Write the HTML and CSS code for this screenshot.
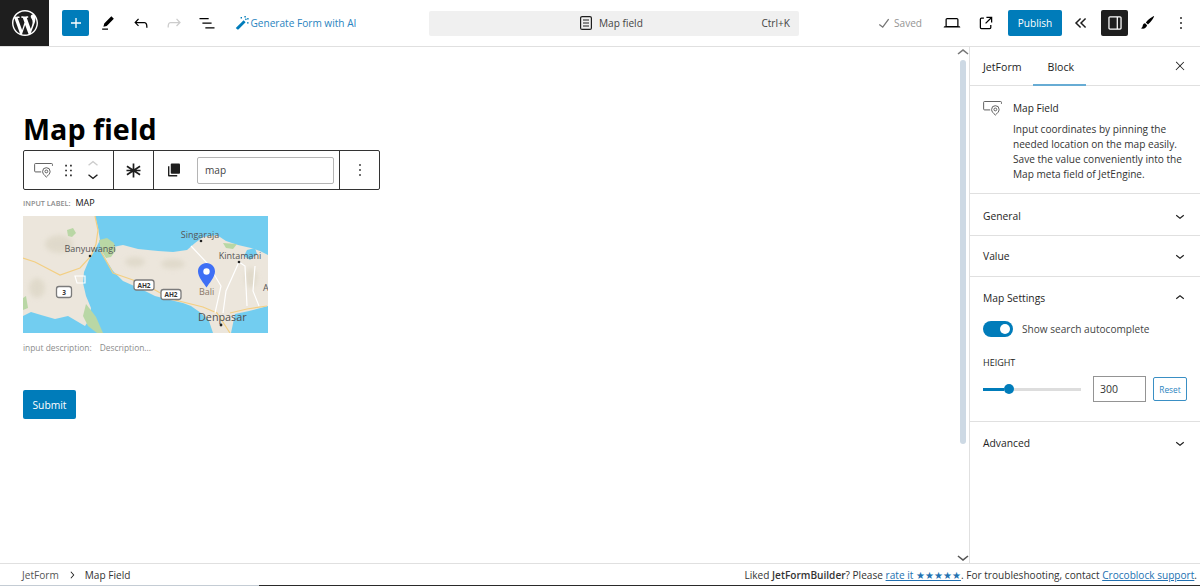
FILE: index.html
```html
<!DOCTYPE html>
<html lang="en">
<head>
    <meta charset="UTF-8">
    <meta name="viewport" content="width=device-width, initial-scale=1.0">
    <title>Map field</title>
    <link rel="stylesheet" href="styles.css">
</head>
<body>
    <header class="topbar">
        <div class="topbar-left">
            <a class="wp-logo">
                <svg width="26" height="26" viewBox="0 0 20 20"><path fill="#fff" d="M20 10c0-5.51-4.49-10-10-10C4.48 0 0 4.49 0 10c0 5.52 4.48 10 10 10 5.51 0 10-4.48 10-10zM7.78 15.37L4.37 6.22c.55-.02 1.17-.08 1.17-.08.5-.06.44-1.13-.06-1.11 0 0-1.45.11-2.37.11-.18 0-.37 0-.58-.01C4.12 2.69 6.87 1.11 10 1.11c2.33 0 4.45.87 6.05 2.34-.68-.11-1.65.39-1.65 1.58 0 .74.45 1.36.9 2.1.35.61.55 1.36.55 2.46 0 1.49-1.4 5-1.4 5l-3.03-8.37c.54-.02.82-.17.82-.17.5-.05.44-1.25-.06-1.22 0 0-1.44.12-2.38.12-.87 0-2.33-.12-2.33-.12-.5-.03-.56 1.2-.06 1.22l.92.08 1.26 3.41zM17.41 10c.24-.64.74-1.87.43-4.25.7 1.29 1.05 2.71 1.05 4.25 0 3.29-1.73 6.24-4.4 7.78.97-2.59 1.94-5.2 2.92-7.78zM6.1 18.09C3.12 16.65 1.11 13.53 1.11 10c0-1.3.23-2.48.72-3.59C3.25 10.3 4.67 14.2 6.1 18.09zm4.03-6.63l2.58 6.98c-.86.29-1.76.45-2.71.45-.79 0-1.57-.11-2.29-.33.81-2.38 1.62-4.74 2.42-7.1z"/></svg>
            </a>
            <button class="add-btn">
                <svg width="20" height="20" viewBox="0 0 24 24"><path fill="#fff" d="M18 11.2h-5.2V6h-1.6v5.2H6v1.6h5.2V18h1.6v-5.2H18z"/></svg>
            </button>
            <button class="icon-btn"><svg width="20" height="20" viewBox="0 0 24 24"><path d="m19 7-3-3-8.5 8.5-1 4 4-1L19 7Zm-7 11.5H5V20h7v-1.5Z"/></svg></button>
            <button class="icon-btn"><svg width="20" height="20" viewBox="0 0 24 24"><path d="M18.3 11.7c-.6-.6-1.4-.9-2.3-.9H6.7l2.9-3.3-1.1-1-4.5 5L8.5 16l1-1-2.7-2.7H16c.5 0 .9.2 1.3.5 1 1 1 3.4 1 4.5v.3h1.5v-.2c0-1.5 0-4.3-1.5-5.7z"/></svg></button>
            <button class="icon-btn is-disabled"><svg width="20" height="20" viewBox="0 0 24 24"><path d="M15.6 6.5l-1.1 1 2.9 3.3H8c-.9 0-1.7.3-2.3.9-1.4 1.5-1.4 4.2-1.4 5.6v.2h1.5v-.3c0-1.1 0-3.5 1-4.5.3-.3.7-.5 1.3-.5h9.2L14.5 15l1.1 1.1 4.6-4.6-4.6-5z"/></svg></button>
            <button class="icon-btn"><svg width="20" height="20" viewBox="0 0 24 24"><path d="M3 6h11v1.5H3V6Zm3.5 5.5h11V13h-11v-1.5ZM21 17H10v1.5h11V17Z"/></svg></button>
            <a class="ai-link">
                <svg width="14" height="14" viewBox="0 0 14 14"><path fill="#007cba" d="M8.6 4.2l2 2L3.4 13.6 2.4 13.6.8 12zM5.6 1h1.4v1.4H5.6zM9.4 0h1.4v1.6H9.4zM12.2 2h1.4v1.4h-1.4zM12 6.2h1.6v1.4H12zM10.9 2.2l1 1-1 1-1-1z"/></svg>
                <span>Generate Form with AI</span>
            </a>
        </div>
        <div class="command-pill">
            <span class="pill-title">
                <svg width="16" height="16" viewBox="0 0 16 16" fill="none" stroke="#1e1e1e" stroke-width="1.2"><rect x="2.6" y="1.6" width="10.8" height="12.8" rx="1.5"/><path d="M5 5h6M5 8h6M5 11h6"/></svg>
                Map field
            </span>
            <span class="pill-key">Ctrl+K</span>
        </div>
        <div class="topbar-right">
            <span class="saved">
                <svg width="14" height="14" viewBox="4 4 16 16"><path fill="#757575" d="M16.7 7.1l-6.3 8.5-3.3-2.5-.9 1.2 4.5 3.4L17.9 8z"/></svg>
                Saved
            </span>
            <button class="icon-btn"><svg width="20" height="20" viewBox="0 0 24 24"><path d="M20.5 16h-.7V8c0-1.1-.9-2-2-2H6.2c-1.1 0-2 .9-2 2v8h-.7c-.8 0-1.5.7-1.5 1.5h20c0-.8-.7-1.5-1.5-1.5zM5.700 8c0-.3.2-.5.5-.5h11.600c.3 0 .5.2.5.5v7.600H5.700V8z"/></svg></button>
            <button class="icon-btn external-btn"><svg width="20" height="20" viewBox="0 0 24 24"><path d="M19.5 4.5h-7V6h4.44l-5.97 5.97 1.06 1.06L18 7.06v4.44h1.5v-7Zm-13 1a2 2 0 0 0-2 2v10a2 2 0 0 0 2 2h10a2 2 0 0 0 2-2v-3H17v3a.5.5 0 0 1-.5.5h-10a.5.5 0 0 1-.5-.5v-10a.5.5 0 0 1 .5-.5h3V5.500h-3Z"/></svg></button>
            <button class="publish-btn">Publish</button>
            <button class="icon-btn">
                <svg width="20" height="20" viewBox="0 0 24 24" fill="none" stroke="#1e1e1e" stroke-width="1.8"><path d="M11.5 6.5 6 12l5.500 5.500M17.500 6.500 12 12l5.500 5.500"/></svg>
            </button>
            <button class="panel-btn">
                <svg width="20" height="20" viewBox="0 0 24 24"><path fill="#fff" d="M18 4H6c-1.1 0-2 .9-2 2v12c0 1.1.9 2 2 2h12c1.1 0 2-.9 2-2V6c0-1.1-.9-2-2-2zm-4 14.5H6c-.3 0-.5-.2-.5-.5V6c0-.3.2-.5.5-.5h8v13zm4.500-.5c0 .3-.2.5-.5.5h-2.500v-13H18c.3 0 .5.2.5.5v12z"/></svg>
            </button>
            <button class="icon-btn brush-btn"><svg width="20" height="20" viewBox="0 0 24 24"><path d="M20.5 3.5c-1.6.2-7.5 4.4-9.9 7.900l2.600 2.300c3-2.600 7.600-8.500 7.300-10.200zM9.700 12.400c-2 .3-2.600 1.800-3 3.400-.3 1.200-1 1.900-2.200 2.400 2.700 1.300 6.600.6 7.600-3.400z"/></svg></button>
            <button class="icon-btn"><svg width="20" height="20" viewBox="0 0 24 24"><path d="M13 19h-2v-2h2v2zm0-6h-2v-2h2v2zm0-6h-2V5h2v2z"/></svg></button>
        </div>
    </header>

    <div class="workspace">
        <main class="canvas">
            <h1 class="form-title">Map field</h1>

            <div class="block-toolbar">
                <div class="toolbar-group group-block">
                    <svg width="20" height="15" viewBox="0 0 21 16" fill="none" stroke="#555"><path d="M7.5 9.5H1.5a1 1 0 0 1-1-1V1.500a1 1 0 0 1 1-1h17a1 1 0 0 1 1 1V3"/><path d="M13 15c-2-2-4-3.500-4-6a4 4 0 0 1 8 0c0 2.500-2 4-4 6z"/><circle cx="13" cy="9" r="1.5"/></svg>
                    <svg class="drag-handle" width="13" height="15" viewBox="4 3 16 18"><path fill="#1e1e1e" d="M8 7h2V5H8v2zm0 6h2v-2H8v2zm0 6h2v-2H8v2zm6-14v2h2V5h-2zm0 8h2v-2h-2v2zm0 6h2v-2h-2v2z"/></svg>
                    <div class="mover">
                        <svg width="16" height="13" viewBox="3 6 18 10"><path fill="#ccc" d="M6.5 12.4L12 8l5.500 4.400-.9 1.200L12 10l-4.500 3.600-1-1.200z"/></svg>
                        <svg width="16" height="13" viewBox="3 8 18 10"><path fill="#1e1e1e" d="M17.5 11.600L12 16l-5.500-4.400.9-1.200L12 14l4.500-3.600 1 1.200z"/></svg>
                    </div>
                </div>
                <div class="toolbar-group group-star">
                    <svg width="15" height="15" viewBox="0 0 16 16" stroke="#1e1e1e" stroke-width="1.8"><path d="M8 .5v15M1 3.500l14 9M15 3.500l-14 9M.5 8h15"/></svg>
                </div>
                <div class="toolbar-group group-name">
                    <svg width="12" height="14" viewBox="0 0 13 14"><path fill="#1e1e1e" d="M4 0h8a1 1 0 0 1 1 1v9a1 1 0 0 1-1 1H4a1 1 0 0 1-1-1V1a1 1 0 0 1 1-1z"/><path fill="#1e1e1e" d="M1.500 3v9.500H10V14H1a1 1 0 0 1-1-1V3z"/></svg>
                    <div class="name-input">map</div>
                </div>
                <div class="toolbar-group group-more">
                    <svg width="20" height="20" viewBox="0 0 24 24"><path fill="#1e1e1e" d="M13 19h-2v-2h2v2zm0-6h-2v-2h2v2zm0-6h-2V5h2v2z"/></svg>
                </div>
            </div>

            <div class="field-label"><span class="hint-caps">INPUT LABEL:</span><span class="label-value">MAP</span></div>

            <svg class="map" width="245" height="117" viewBox="0 0 245 117">
                <defs>
                    <filter id="soft" x="-20%" y="-20%" width="140%" height="140%"><feGaussianBlur stdDeviation="2.5"/></filter>
                    <filter id="edge"><feGaussianBlur stdDeviation=".35"/></filter>
                </defs>
                <rect width="245" height="117" fill="#72cdf0"/>
                <g filter="url(#edge)">
                    <path fill="#ece6dc" d="M0 0H72L75 12 77 24 72 34 66 44 61 56 60 67 63 80 68 92 66 104 62 110 45 100 32 103 18 99 8 96 0 100Z"/>
                    <path fill="#ece6dc" d="M77 24 90 31 100 29 115 33 135 35 150 36 164 34 172 27 180 21 194 19 203 25 215 29 228 32 237 35 245 39V90L226 95 212 98 208 117H190L186 105 178 97 168 90 160 87 147 84 132 80 118 73 100 65 90 55 83 44 78 34Z"/>
                    <path fill="#b9d7a5" d="M60 100 63 88 67 93 73 101 80 117H74L65 110Z"/>
                    <path fill="#b9d7a5" d="M76 24 84 22 91 27 93 34 88 41 83 42 78 34Z"/>
                    <path fill="#b9d7a5" d="M44 14 50 12 53 17 49 21 45 20ZM200 27 214 28 210 33 203 32ZM0 82 3 80 5 92 0 94Z"/>
                </g>
                <g filter="url(#soft)" fill="#d8d2c0" opacity=".6">
                    <ellipse cx="36" cy="28" rx="14" ry="9"/>
                    <ellipse cx="14" cy="72" rx="8" ry="10"/>
                    <ellipse cx="112" cy="46" rx="10" ry="5"/>
                    <ellipse cx="150" cy="48" rx="12" ry="5"/>
                    <ellipse cx="228" cy="62" rx="6" ry="10"/>
                </g>
                <path fill="#72cdf0" d="M224 34 232 32 234 38 227 44 221 40Z"/>
                <path fill="none" stroke="#f3cf83" stroke-width="1.2" d="M72 0 75 14 73 28 68 40 57 52 37 59 12 46 0 42M77 34 90 57 110 64 132 74 148 83 164 87 180 91 194 97 207 117M207 97 224 93 244 90"/>
                <path fill="none" stroke="#fff" stroke-width="1.2" d="M168 30 185 48 198 70 192 97M200 97 203 75 216 46 222 50 224 90M232 50 230 75 236 90M52 60H62V67H54Z"/>
                <g class="map-shield">
                    <rect x="33.5" y="70.5" width="15" height="11" rx="2.5"/><text x="41" y="78.500">3</text>
                    <rect x="111" y="64" width="20" height="10" rx="2.5"/><text x="121" y="71.500">AH2</text>
                    <rect x="138" y="73.5" width="20" height="10" rx="2.5"/><text x="148" y="81">AH2</text>
                </g>
                <g class="map-text">
                    <text x="67" y="36">Banyuwangi</text>
                    <text x="177" y="22">Singaraja</text>
                    <text x="217" y="43">Kintamani</text>
                    <text x="240" y="75">A</text>
                    <text class="map-bali" x="176" y="79">Bali</text>
                    <text class="map-big" x="175" y="105">Denpasar</text>
                </g>
                <circle cx="67" cy="40" r="1.3" fill="#222"/>
                <circle cx="178" cy="25" r="1.3" fill="#222"/>
                <circle cx="216" cy="46" r="1.3" fill="#222"/>
                <circle cx="198" cy="109" r="1.4" fill="#222"/>
                <path fill="#3e6ff5" d="M183.500 47c-4.800 0-8.500 3.600-8.500 8.500 0 5.500 6 12 8.500 16 2.500-4 8.500-10.500 8.500-16 0-4.900-3.700-8.500-8.500-8.500z"/>
                <circle cx="183.5" cy="55.5" r="3.2" fill="#fff"/>
            </svg>

            <div class="field-desc"><span>input description:</span><span>Description...</span></div>

            <button class="submit-btn">Submit</button>
        </main>

        <div class="scrollbar">
            <svg width="12" height="12" viewBox="6 6 12 12"><path fill="#777" d="M6.5 12.400L12 8l5.500 4.400-.9 1.200L12 10l-4.500 3.600-1-1.200z"/></svg>
            <div class="scroll-thumb"></div>
            <svg class="scroll-down" width="12" height="12" viewBox="6 6 12 12"><path fill="#555" d="M17.5 11.600L12 16l-5.500-4.400.9-1.200L12 14l4.500-3.600 1 1.200z"/></svg>
        </div>

        <aside class="sidebar">
            <div class="tabs">
                <span class="tab">JetForm</span>
                <span class="tab is-active">Block</span>
                <svg class="tabs-close" width="14" height="14" viewBox="0 0 24 24"><path fill="#1e1e1e" d="M13 11.800l6.100-6.300-1-1-6.100 6.200-6.100-6.300-1 1 6.100 6.300-6.500 6.700 1 1 6.500-6.600 6.500 6.600 1-1z"/></svg>
            </div>

            <section class="block-card">
                <svg class="block-card-icon" width="20" height="15" viewBox="0 0 21 16" fill="none" stroke="#555"><path d="M7.5 9.5H1.500a1 1 0 0 1-1-1V1.500a1 1 0 0 1 1-1h17a1 1 0 0 1 1 1V3"/><path d="M13 15c-2-2-4-3.500-4-6a4 4 0 0 1 8 0c0 2.500-2 4-4 6z"/><circle cx="13" cy="9" r="1.5"/></svg>
                <div>
                    <h2 class="block-card-title">Map Field</h2>
                    <p class="block-card-text">Input coordinates by pinning the needed location on the map easily. Save the value conveniently into the Map meta field of JetEngine.</p>
                </div>
            </section>

            <section class="panel panel-general">
                <span>General</span>
                <svg width="18" height="18" viewBox="0 0 24 24"><path fill="#1e1e1e" d="M17.5 11.600L12 16l-5.500-4.400.9-1.200L12 14l4.500-3.600 1 1.200z"/></svg>
            </section>
            <section class="panel panel-value">
                <span>Value</span>
                <svg width="18" height="18" viewBox="0 0 24 24"><path fill="#1e1e1e" d="M17.5 11.600L12 16l-5.500-4.400.9-1.200L12 14l4.500-3.600 1 1.200z"/></svg>
            </section>

            <section class="map-settings">
                <div class="panel-head">
                    <span>Map Settings</span>
                    <svg width="18" height="18" viewBox="0 0 24 24"><path fill="#1e1e1e" d="M6.5 12.400L12 8l5.500 4.400-.9 1.200L12 10l-4.500 3.600-1-1.200z"/></svg>
                </div>
                <div class="toggle-row">
                    <span class="toggle"><span class="toggle-knob"></span></span>
                    <span>Show search autocomplete</span>
                </div>
                <div class="caps-label">HEIGHT</div>
                <div class="range-row">
                    <div class="slider">
                        <span class="slider-fill"></span>
                        <span class="slider-thumb"></span>
                        <span class="slider-rest"></span>
                    </div>
                    <div class="number-input">300</div>
                    <button class="reset-btn">Reset</button>
                </div>
            </section>

            <section class="panel panel-advanced">
                <span>Advanced</span>
                <svg width="18" height="18" viewBox="0 0 24 24"><path fill="#1e1e1e" d="M17.5 11.600L12 16l-5.500-4.400.9-1.200L12 14l4.500-3.600 1 1.200z"/></svg>
            </section>
        </aside>
    </div>

    <footer class="statusbar">
        <div class="crumbs">
            <span class="crumb-root">JetForm</span>
            <svg width="14" height="14" viewBox="0 0 24 24"><path fill="#1e1e1e" d="M10.600 6 9.400 7l4.600 5-4.600 5 1.200 1 5.400-6z"/></svg>
            <span>Map Field</span>
        </div>
        <div class="rate-note">Liked <span class="rate-name">JetFormBuilder</span>? Please <a>rate it ★★★★★</a>. For troubleshooting, contact <a>Crocoblock support</a>.</div>
    </footer>
    <div class="window-edge"></div>
</body>
</html>
```

FILE: styles.css
```css
/* General styles */
html, body {
    margin: 0;
    padding: 0;
}

body {
    width: 1200px;
    height: 586px;
    overflow: hidden;
    background-color: #fff;
    color: #1e1e1e;
    font-family: "Open Sans", "Noto Sans", sans-serif;
    font-size: 10.1px;
}

button {
    font-family: inherit;
    border: none;
    padding: 0;
    cursor: pointer;
}

svg {
    display: block;
    flex: none;
}

/* Top bar */
.topbar {
    display: flex;
    align-items: center;
    height: 46px;
    border-bottom: 1px solid #e0e0e0;
}

.topbar-left {
    display: flex;
    align-items: center;
    flex: 0 0 429px;
    height: 100%;
}

.wp-logo {
    display: flex;
    align-items: center;
    justify-content: center;
    width: 49px;
    height: 100%;
    background-color: #1e1e1e;
    margin-right: 13px;
}

.add-btn {
    display: flex;
    align-items: center;
    justify-content: center;
    width: 27px;
    height: 26px;
    background-color: #007cba;
    border-radius: 2px;
    margin-right: 2.5px;
}

.icon-btn {
    display: flex;
    align-items: center;
    justify-content: center;
    width: 33px;
    height: 26px;
    background: none;
}

.icon-btn.is-disabled svg {
    fill: #ccc;
}

.ai-link {
    display: flex;
    align-items: center;
    gap: 2px;
    margin-left: 11px;
    color: #2a84c0;
}

.command-pill {
    display: flex;
    align-items: center;
    flex: 0 0 370px;
    height: 25px;
    box-sizing: border-box;
    padding: 0 9px 0 149px;
    background-color: #f0f0f0;
    border-radius: 2px;
    color: #444;
}

.pill-title {
    display: flex;
    align-items: center;
    gap: 5px;
}

.pill-key {
    margin-left: auto;
}

.topbar-right {
    display: flex;
    align-items: center;
    flex: 1;
    padding-left: 78px;
    height: 100%;
}

.saved {
    display: flex;
    align-items: center;
    gap: 3px;
    width: 58px;
    color: #949494;
}

.external-btn {
    margin-left: 1px;
}

.publish-btn {
    width: 54px;
    height: 26px;
    margin: 0 2.5px 0 6px;
    background-color: #007cba;
    color: #fff;
    font-size: 10.1px;
    border-radius: 2px;
}

.panel-btn {
    display: flex;
    align-items: center;
    justify-content: center;
    width: 27px;
    height: 26px;
    margin-left: 3.5px;
    background-color: #1e1e1e;
    border-radius: 2px;
}

.brush-btn {
    margin-left: 2.5px;
    margin-right: 1px;
}

/* Workspace */
.workspace {
    display: flex;
    height: 516px;
}

.canvas {
    flex: 0 0 957px;
    box-sizing: border-box;
    padding: 0 0 0 23px;
}

.form-title {
    margin: 60px 0 0;
    font-size: 28.7px;
    line-height: 43px;
    font-weight: 700;
    color: #000;
}

/* Block toolbar */
.block-toolbar {
    display: flex;
    box-sizing: border-box;
    width: 357px;
    height: 40px;
    border: 1px solid #333;
    border-radius: 2px;
}

.toolbar-group {
    display: flex;
    align-items: center;
    height: 100%;
    box-sizing: border-box;
    border-right: 1px solid #333;
}

.group-block {
    width: 90px;
    padding-left: 10px;
}

.drag-handle {
    margin-left: 8px;
}

.mover {
    display: flex;
    flex-direction: column;
    align-items: center;
    margin-left: 10px;
}

.group-star {
    justify-content: center;
    width: 40px;
}

.group-name {
    width: 186px;
    padding-left: 14px;
    gap: 17px;
}

.name-input {
    box-sizing: border-box;
    width: 137px;
    height: 27px;
    line-height: 25px;
    padding-left: 7px;
    border: 1px solid #b5b5b5;
    border-radius: 2px;
    color: #444;
}

.group-more {
    flex: 1;
    justify-content: center;
    border-right: none;
}

/* Form fields */
.field-label {
    display: flex;
    align-items: center;
    gap: 5px;
    height: 25px;
}

.hint-caps {
    color: #8c8c8c;
    font-size: 7.3px;
    font-weight: 600;
}

.label-value {
    color: #111;
    font-size: 9px;
    font-weight: 500;
}

.map {
    margin-top: 1px;
}

.map-shield rect {
    fill: #fff;
    stroke: #7b7b7b;
    stroke-width: 1.3;
}

.map-shield text {
    font-size: 6.5px;
    font-weight: 700;
    text-anchor: middle;
    fill: #333;
}

.map-text text {
    font-size: 9px;
    fill: #555;
}

.map-text .map-bali {
    fill: #8a7868;
}

.map-text .map-big {
    font-size: 10.8px;
    fill: #4e4e4e;
}

.map-text text:nth-child(-n+3) {
    text-anchor: middle;
}

.field-desc {
    display: flex;
    gap: 8px;
    margin-top: 8px;
    height: 13px;
    line-height: 13px;
    font-size: 8.4px;
    color: #8c8c8c;
}

.submit-btn {
    display: block;
    width: 53px;
    height: 29px;
    margin-top: 36px;
    background-color: #007cba;
    color: #fff;
    font-size: 10.3px;
    font-weight: 500;
    border-radius: 2px;
}

/* Scrollbar */
.scrollbar {
    display: flex;
    flex-direction: column;
    align-items: center;
    flex: 0 0 12px;
}

.scroll-thumb {
    width: 6px;
    height: 384px;
    margin-top: 1px;
    background-color: #cdd9e4;
    border-radius: 3px;
}

.scroll-down {
    margin-top: auto;
}

/* Sidebar */
.sidebar {
    flex: 1;
    border-left: 1px solid #e0e0e0;
}

.tabs {
    display: flex;
    align-items: center;
    height: 39px;
    padding-left: 13px;
    border-bottom: 1px solid #e0e0e0;
    box-sizing: border-box;
}

.tab {
    display: flex;
    align-items: center;
    height: 39px;
    box-sizing: border-box;
    padding-top: 1px;
    font-size: 10.6px;
    font-weight: 500;
}

.tab.is-active {
    width: 53px;
    margin-left: 11px;
    padding-left: 15px;
    padding-top: 3px;
    border-bottom: 2px solid #67acd4;
}

.tabs-close {
    margin-left: auto;
    margin-right: 13px;
}

.block-card {
    display: flex;
    gap: 10px;
    height: 108px;
    box-sizing: border-box;
    padding: 15px 13px 0 13px;
    border-bottom: 1px solid #e0e0e0;
}

.block-card-title {
    margin: 0 0 7px;
    font-size: 10.1px;
    line-height: 14px;
    font-weight: 500;
}

.block-card-text {
    margin: 0;
    line-height: 15px;
    color: #333;
}

.panel, .panel-head {
    display: flex;
    align-items: center;
    justify-content: space-between;
    padding: 0 13px;
    font-size: 10.3px;
    font-weight: 500;
}

.panel {
    box-sizing: border-box;
    border-bottom: 1px solid #e0e0e0;
}

.panel svg, .panel-head svg {
    margin-right: -2px;
}

.panel-general {
    height: 42px;
    padding-top: 2px;
}

.panel-value {
    height: 41px;
}

.panel-advanced {
    height: 41px;
    border-bottom: none;
}

.map-settings {
    height: 145px;
    box-sizing: border-box;
    padding-top: 11px;
    border-bottom: 1px solid #e0e0e0;
}

.panel-head {
    height: 20px;
}

.toggle-row {
    display: flex;
    align-items: center;
    gap: 9px;
    margin-top: 13px;
    padding-left: 13px;
    color: #444;
}

.toggle {
    display: flex;
    align-items: center;
    justify-content: flex-end;
    box-sizing: border-box;
    width: 30px;
    height: 16px;
    padding-right: 3px;
    background-color: #007cba;
    border-radius: 8px;
}

.toggle-knob {
    width: 10px;
    height: 10px;
    background-color: #fff;
    border-radius: 50%;
}

.caps-label {
    margin-top: 20px;
    padding-left: 13px;
    font-size: 9px;
    line-height: 11px;
    font-weight: 500;
}

.range-row {
    display: flex;
    align-items: center;
    margin-top: 8px;
    padding-left: 13px;
}

.slider {
    display: flex;
    align-items: center;
    width: 98px;
}

.slider-fill {
    width: 21px;
    height: 3px;
    background-color: #007cba;
}

.slider-thumb {
    width: 10px;
    height: 10px;
    background-color: #007cba;
    border-radius: 50%;
}

.slider-rest {
    flex: 1;
    height: 3px;
    background-color: #ddd;
}

.number-input {
    box-sizing: border-box;
    width: 53px;
    height: 26px;
    margin-left: 12px;
    padding-left: 6px;
    line-height: 24px;
    border: 1px solid #949494;
    font-size: 10.5px;
    color: #333;
}

.reset-btn {
    width: 34px;
    height: 24px;
    margin-left: 7px;
    background-color: #fff;
    border: 1px solid #3a8fc4;
    border-radius: 2px;
    color: #2a84c0;
    font-size: 8.3px;
}

/* Footer */
.statusbar {
    display: flex;
    align-items: center;
    justify-content: space-between;
    height: 22px;
    box-sizing: border-box;
    padding: 0 3px 0 22px;
    border-top: 1px solid #e0e0e0;
    color: #333;
}

.crumbs {
    display: flex;
    align-items: center;
    gap: 6px;
}

.crumb-root {
    color: #555;
}

.rate-name {
    font-weight: 600;
}

.rate-note a {
    color: #2271b1;
    text-decoration: underline;
}

.window-edge {
    height: 1px;
    background: linear-gradient(to right, #c4ccd4 259px, #2a2a2a 259px);
}
```
